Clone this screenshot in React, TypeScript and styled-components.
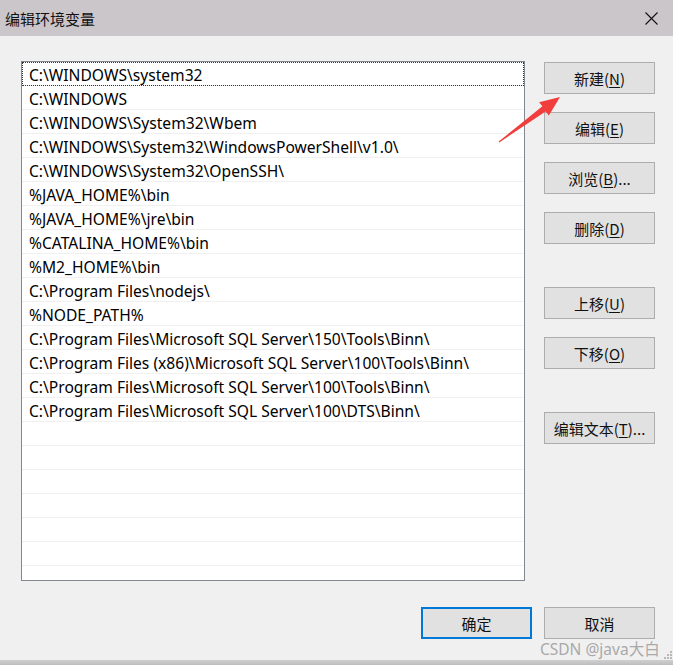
import React from "react";
import styled, { createGlobalStyle } from "styled-components";

const paths = [
  "C:\\WINDOWS\\system32",
  "C:\\WINDOWS",
  "C:\\WINDOWS\\System32\\Wbem",
  "C:\\WINDOWS\\System32\\WindowsPowerShell\\v1.0\\",
  "C:\\WINDOWS\\System32\\OpenSSH\\",
  "%JAVA_HOME%\\bin",
  "%JAVA_HOME%\\jre\\bin",
  "%CATALINA_HOME%\\bin",
  "%M2_HOME%\\bin",
  "C:\\Program Files\\nodejs\\",
  "%NODE_PATH%",
  "C:\\Program Files\\Microsoft SQL Server\\150\\Tools\\Binn\\",
  "C:\\Program Files (x86)\\Microsoft SQL Server\\100\\Tools\\Binn\\",
  "C:\\Program Files\\Microsoft SQL Server\\100\\Tools\\Binn\\",
  "C:\\Program Files\\Microsoft SQL Server\\100\\DTS\\Binn\\",
];

const rows = [...paths, ...Array(7).fill("")];

const sideButtons = [
  { label: "新建", key: "N", gap: 0 },
  { label: "编辑", key: "E", gap: 18 },
  { label: "浏览", key: "B", gap: 18, dots: true },
  { label: "删除", key: "D", gap: 18 },
  { label: "上移", key: "U", gap: 43 },
  { label: "下移", key: "O", gap: 18 },
  { label: "编辑文本", key: "T", gap: 43, dots: true },
];

const App = () => {
  return (
    <Window>
      <GlobalStyle />
      <TitleBar>
        <Title>编辑环境变量</Title>
        <Close>
          <svg width="13" height="13" viewBox="0 0 13 13">
            <path d="M0.5 0.5 L12.5 12.5 M12.5 0.5 L0.5 12.5" stroke="#111" strokeWidth="1.1" />
          </svg>
        </Close>
      </TitleBar>
      <Body>
        <Main>
          <ListBox>
            {rows.map((p, i) => (
              <Row key={i} $focused={i === 0}>
                {p}
              </Row>
            ))}
          </ListBox>
          <Side>
            {sideButtons.map((b) => (
              <Button key={b.key} $gap={b.gap}>
                {b.label}(<u>{b.key}</u>){b.dots ? "..." : ""}
              </Button>
            ))}
          </Side>
        </Main>
        <Footer>
          <Button $primary>确定</Button>
          <Button>取消</Button>
        </Footer>
      </Body>
      <BottomEdge />
      <Arrow width="673" height="665" viewBox="0 0 673 665">
        <polygon
          points="499.3,142.4 545.6,111.6 548.9,115.6 560,97 539.1,102.2 542.4,106.2 498.7,141.6"
          fill="#f23d3d"
        />
      </Arrow>
      <Watermark>CSDN @java大白</Watermark>
      <Grip>
        <svg width="10" height="10" viewBox="0 0 10 10">
          <rect x="7" y="1" width="2" height="2" fill="#b8b8b8" />
          <rect x="4" y="4" width="2" height="2" fill="#b8b8b8" />
          <rect x="7" y="4" width="2" height="2" fill="#b8b8b8" />
          <rect x="1" y="7" width="2" height="2" fill="#b8b8b8" />
          <rect x="4" y="7" width="2" height="2" fill="#b8b8b8" />
          <rect x="7" y="7" width="2" height="2" fill="#b8b8b8" />
        </svg>
      </Grip>
    </Window>
  );
};

export default App;

const GlobalStyle = createGlobalStyle`
  html, body {
    margin: 0;
    padding: 0;
    background: #f0f0f0;
  }
`;

const Window = styled.div`
  position: relative;
  width: 673px;
  height: 665px;
  overflow: hidden;
  background: #f0f0f0;
  display: flex;
  flex-direction: column;
  font-family: "Noto Sans", "Noto Sans CJK SC", sans-serif;
  color: #000;
`;

const TitleBar = styled.div`
  height: 36px;
  flex-shrink: 0;
  background: #cbc6ca;
  display: flex;
  align-items: center;
  justify-content: space-between;
  padding: 0 15px 0 5px;
`;

const Title = styled.div`
  font-family: "Noto Sans CJK SC", sans-serif;
  font-size: 15px;
  color: #111;
`;

const Close = styled.div`
  display: flex;
  align-items: center;
`;

const Body = styled.div`
  flex: 1;
  display: flex;
  flex-direction: column;
  padding: 25px 18px 0 21px;
`;

const Main = styled.div`
  display: flex;
  gap: 19px;
`;

const ListBox = styled.div`
  width: 503px;
  height: 518px;
  border: 1px solid #828790;
  background: #fff;
  overflow: hidden;
`;

const Row = styled.div<{ $focused?: boolean }>`
  box-sizing: border-box;
  height: 24px;
  line-height: 22px;
  padding: 2px 0 0 7px;
  font-size: 15.6px;
  white-space: nowrap;
  border-bottom: 1px solid #f0f0f0;
  outline: ${(p) => (p.$focused ? "1px dotted #333" : "none")};
  outline-offset: -1px;
`;

const Side = styled.div`
  display: flex;
  flex-direction: column;
  padding-top: 1px;
`;

const Button = styled.div<{ $gap?: number; $primary?: boolean }>`
  box-sizing: border-box;
  width: 111px;
  height: 32px;
  margin-top: ${(p) => p.$gap || 0}px;
  background: #e1e1e1;
  border: ${(p) => (p.$primary ? "2px solid #0078d7" : "1px solid #adadad")};
  display: flex;
  align-items: center;
  justify-content: center;
  font-family: "Noto Sans CJK SC", sans-serif;
  font-size: 15px;
  color: #111;
  white-space: nowrap;

  u {
    text-underline-offset: 2px;
  }
`;

const Footer = styled.div`
  display: flex;
  justify-content: flex-end;
  gap: 12px;
  margin-top: 26px;
`;

const BottomEdge = styled.div`
  height: 5px;
  flex-shrink: 0;
  background: linear-gradient(#d0d0d0, #bdbdbd);
`;

const Arrow = styled.svg`
  position: absolute;
  left: 0;
  top: 0;
  pointer-events: none;
`;

const Watermark = styled.div`
  position: absolute;
  left: 540px;
  top: 637px;
  font-family: "Noto Sans", "Noto Sans CJK SC", sans-serif;
  font-size: 15.5px;
  color: #a9a9a9;
  white-space: nowrap;
`;

const Grip = styled.div`
  position: absolute;
  right: 0;
  bottom: 5px;
  display: flex;
`;
